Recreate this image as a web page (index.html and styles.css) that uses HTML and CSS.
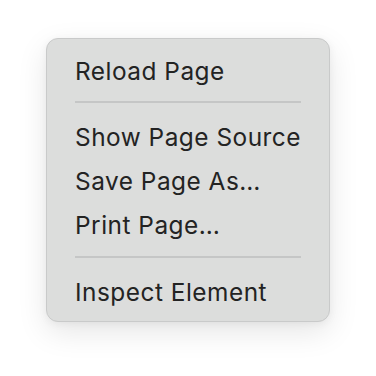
FILE: index.html
```html
<!DOCTYPE html>
<html>
<head>
<meta charset="utf-8">
<link rel="stylesheet" href="styles.css">
</head>
<body>
<div class="menu">
  <div class="item">Reload Page</div>
  <div class="sep sep-first"></div>
  <div class="item">Show Page Source</div>
  <div class="item">Save Page As…</div>
  <div class="item">Print Page…</div>
  <div class="sep sep-second"></div>
  <div class="item">Inspect Element</div>
</div>
</body>
</html>
```
FILE: styles.css
```css
html, body {
  margin: 0;
  padding: 0;
  background: #ffffff;
}
body {
  width: 376px;
  height: 376px;
  padding: 38px 0 0 46px;
  box-sizing: border-box;
}
.menu {
  width: 284px;
  height: 284px;
  box-sizing: border-box;
  background: #dcdddc;
  border: 1px solid #c9caca;
  border-radius: 12px;
  padding: 10.3px 28px 0 28px;
  box-shadow: 0 10px 30px rgba(0, 0, 0, 0.10), 0 2px 8px rgba(0, 0, 0, 0.05);
  font-family: Inter, "Liberation Sans", sans-serif;
  color: #232323;
}
.item {
  height: 44px;
  line-height: 44px;
  font-size: 24.4px;
  letter-spacing: 0.5px;
  white-space: nowrap;
}
.sep {
  height: 2px;
  background: #c5c6c6;
}
.sep-first {
  margin: 8px 0 11.5px 0;
}
.sep-second {
  margin: 9px 0 12.5px 0;
}
```
